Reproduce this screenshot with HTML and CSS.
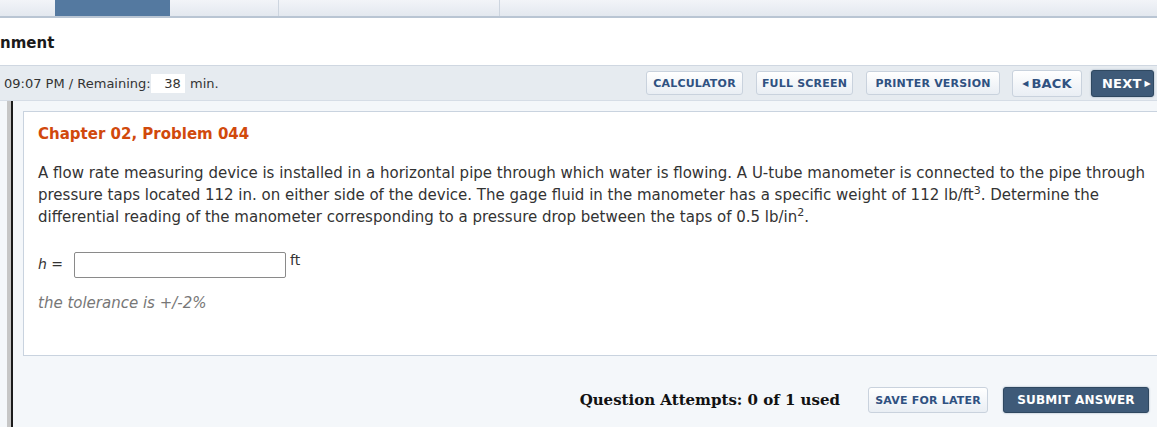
FILE: index.html
```html
<!DOCTYPE html>
<html>
<head>
<meta charset="utf-8">
<link rel="stylesheet" href="styles.css">
</head>
<body>
<div class="topnav">
  <div class="tab tab-lead"></div>
  <div class="tab tab-active"></div>
  <div class="tab tab-a"></div>
  <div class="tab tab-b"></div>
  <div class="tab tab-rest"></div>
</div>
<div class="heading">nment</div>
<div class="toolbar">
  <div class="timer">09:07 PM / Remaining: <span class="remain">38</span> min.</div>
  <div class="tools">
    <button class="btn w-calc">CALCULATOR</button>
    <button class="btn w-full">FULL SCREEN</button>
    <button class="btn w-print">PRINTER VERSION</button>
    <button class="btn btn-back"><span class="arr">&#9664;</span>BACK</button>
    <button class="btn btn-dark btn-next">NEXT<span class="arr">&#9654;</span></button>
  </div>
</div>
<div class="main">
  <div class="rail">
    <div class="content">
      <div class="card">
        <h2 class="title">Chapter 02, Problem 044</h2>
        <p class="question">A flow rate measuring device is installed in a horizontal pipe through which water is flowing. A U-tube manometer is connected to the pipe through pressure taps located 112 in. on either side of the device. The gage fluid in the manometer has a specific weight of 112 lb/ft<sup>3</sup>. Determine the differential reading of the manometer corresponding to a pressure drop between the taps of 0.5 lb/in<sup>2</sup>.</p>
        <div class="answer">
          <span class="var"><i>h</i> =</span>
          <input class="field" type="text">
          <span class="unit">ft</span>
        </div>
        <p class="tol">the tolerance is +/-2%</p>
      </div>
      <div class="footer">
        <span class="attempts">Question Attempts: 0 of 1 used</span>
        <button class="btn btn-save">SAVE FOR LATER</button>
        <button class="btn btn-dark btn-submit">SUBMIT ANSWER</button>
      </div>
    </div>
  </div>
</div>
</body>
</html>
```
FILE: styles.css
```css
html, body {
  margin: 0;
  padding: 0;
  overflow: hidden;
  width: 1157px;
  height: 427px;
  background: #ffffff;
  font-family: "DejaVu Sans", Verdana, sans-serif;
}
.topnav {
  display: flex;
  height: 16px;
  background: linear-gradient(#f2f4f8, #e3e8ef);
  border-bottom: 2px solid #b9c5d3;
}
.tab { height: 16px; }
.tab-lead { width: 55px; }
.tab-active { width: 115px; background: #5479a0; }
.tab-a { width: 108px; border-right: 1px solid #cdd5df; }
.tab-b { width: 220px; border-right: 1px solid #cdd5df; }
.tab-rest { flex: 1; }
.heading {
  height: 47px;
  display: flex;
  align-items: center;
  font-weight: bold;
  font-size: 15px;
  color: #1a1a1a;
  padding-top: 2px;
  box-sizing: border-box;
}
.toolbar {
  display: flex;
  align-items: center;
  justify-content: space-between;
  height: 34px;
  background: #e6ebf0;
  border-top: 1px solid #cfd7e1;
  border-bottom: 1px solid #d6dde6;
}
.timer {
  font-size: 13px;
  color: #333;
  padding-left: 4px;
}
.remain {
  display: inline-block;
  background: #fff;
  width: 30px;
  text-align: right;
  padding: 2px 4px 2px 0;
  margin: 0 1px 0 -4px;
}
.tools {
  display: flex;
  align-items: center;
  gap: 13px;
  margin-right: 3px;
}
.btn {
  font-family: "DejaVu Sans", Verdana, sans-serif;
  font-weight: bold;
  font-size: 11px;
  letter-spacing: 0.2px;
  color: #2f5181;
  background: linear-gradient(#ffffff, #e9eef4);
  border: 1px solid #c9d2dd;
  border-radius: 3px;
  height: 24px;
  padding: 0;
  cursor: pointer;
}
.w-calc { width: 97px; }
.w-full { width: 97px; }
.w-print { width: 134px; }
.btn-back {
  font-size: 13px;
  color: #2f5181;
  height: 27px;
  width: 70px;
  margin-left: -1px;
}
.btn-back .arr { font-size: 8px; margin-right: 3px; vertical-align: 2px; }
.btn-dark {
  background: #3e5a78;
  color: #fff;
  border: 1px solid #2f4860;
  box-shadow: 0 0 2px #8da0b5;
}
.btn-next {
  font-size: 13px;
  height: 27px;
  width: 63px;
  margin-left: -4px;
  padding: 0 0 0 10px;
  text-align: left;
}
.btn-next .arr { font-size: 8px; margin-left: 3px; vertical-align: 2px; }
.main {
  background: #f4f7fa;
  height: 326px;
  padding-left: 7px;
}
.rail {
  height: 100%;
  border-left: 4px solid #c6c6c6;
}
.content {
  height: 100%;
  border-left: 2px solid #1c1c1c;
  padding-left: 10px;
  padding-top: 10px;
  box-sizing: border-box;
}
.card {
  width: 1170px;
  height: 245px;
  box-sizing: border-box;
  background: #fff;
  border: 1px solid #c9d3df;
  padding: 12px 14px;
}
.title {
  margin: 0;
  font-size: 15px;
  font-weight: bold;
  color: #d1490c;
  line-height: 20px;
}
.question {
  margin: 18px 0 0 0;
  font-size: 15px;
  line-height: 22px;
  color: #333;
  width: 1130px;
}
.question sup { font-size: 11px; line-height: 10px; vertical-align: 6px; }
.answer {
  display: flex;
  align-items: flex-start;
  margin-top: 24px;
  font-size: 14px;
  color: #333;
}
.var { margin-top: 4px; width: 36px; }
.field {
  width: 212px;
  height: 26px;
  box-sizing: border-box;
  border: 1px solid #8a8a8a;
  border-radius: 2px;
  margin: 0;
}
.unit { margin-left: 4px; margin-top: 0; }
.tol {
  margin: 16px 0 0 0;
  font-size: 15px;
  font-style: italic;
  color: #777;
}
.footer {
  display: flex;
  align-items: center;
  justify-content: flex-end;
  width: 1126px;
  margin-top: 31px;
}
.attempts {
  font-family: "DejaVu Serif", Georgia, serif;
  font-weight: bold;
  font-size: 15px;
  color: #111;
  margin-right: 28px;
}
.btn-save {
  height: 26px;
  width: 120px;
  margin-right: 15px;
}
.btn-submit {
  height: 26px;
  width: 146px;
  font-size: 12px;
}
```
